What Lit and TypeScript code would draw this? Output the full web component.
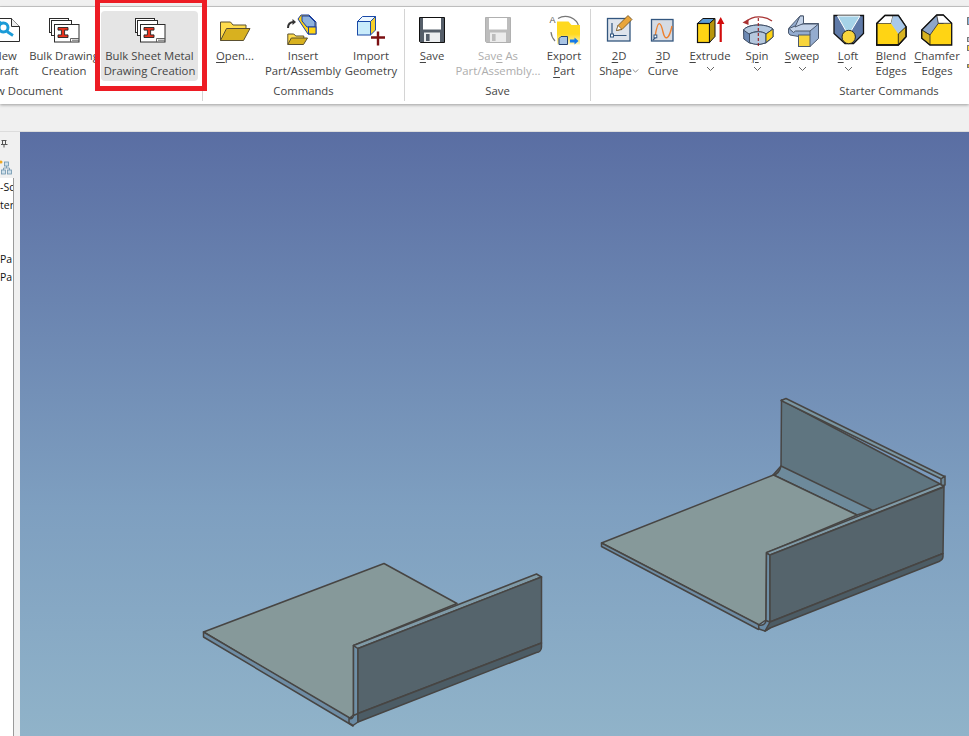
import { LitElement, html, css, svg, nothing } from "lit";
import { customElement } from "lit/decorators.js";

const INK = "#2b2b2b";

const sheets = svg`
  <rect x="1.5" y="4.5" width="19" height="14" fill="#fff" stroke="${INK}"/>
  <rect x="3.5" y="6.5" width="20" height="15" fill="#fff" stroke="${INK}"/>
  <rect x="6.5" y="10.5" width="24.5" height="17.5" fill="#fff" stroke="${INK}"/>
  <path d="M10 13.5h10v2.6h-3.4v4.8H20v2.6H10v-2.6h3.4v-4.8H10z" fill="#e8321c" stroke="#222" stroke-width=".9"/>
  <path d="M22.5 24.5H31M22.5 24.5v3.5M24 26.2h7" fill="none" stroke="#555" stroke-width=".9"/>`;

const floppy = (body: string, edge: string, panel: string) => svg`
  <path d="M3.5 3.5h25v25h-24l-1-1z" fill="${body}" stroke="${edge}"/>
  <rect x="7" y="4" width="18" height="11.5" fill="#fff"/>
  <rect x="8" y="18.5" width="16" height="9.5" fill="${panel}"/>
  <rect x="10" y="20" width="3.6" height="7" fill="${body}"/>`;

const folderParts = svg`
  <path d="M1.5 26.5V8h10l2.5 3h13v5" fill="#ffdc4d" stroke="#5b5030"/>`;

const ICONS: Record<string, unknown> = {
  draft: svg`
    <path d="M8.5 4.5h14l8 8v15h-22z" fill="#fff" stroke="${INK}"/>
    <path d="M22.5 4.5v8h8" fill="#eee" stroke="${INK}"/>
    <circle cx="14.500" cy="13.500" r="4.500" fill="none" stroke="#1b9bd7" stroke-width="3"/>
    <path d="M18 17.500l6 4M9 7l4 3" stroke="#1b9bd7" stroke-width="2.800"/>`,
  sheets,
  open: svg`
    ${folderParts}
    <path d="M1.5 26.5l6-12h23.5l-6.5 12z" fill="#d8b11f" stroke="#5b5030"/>`,
  insert: svg`
    <path d="M1 14c0-4 2.500-6 6-6" fill="none" stroke="#333" stroke-width="2"/>
    <path d="M5.500 5l3.500 3-3.500 3z" fill="#333"/>
    <path d="M.8 30.500V20h6l2 2h8v3" fill="#ffdc4d" stroke="#5b5030"/>
    <path d="M.8 30.500l3.500-6.500H20.500l-4 6.500z" fill="#d8b11f" stroke="#5b5030"/>
    <path d="M11 5l3-4h8l7 7v12h-8z" fill="#ffd414" stroke="#1c3f9e"/>
    <path d="M15 2h7l6 6v5h-8l-5-6z" fill="#8fb2dc" stroke="#1c3f9e"/>
    <rect x="21.500" y="13" width="7.500" height="7" fill="#ffd414" stroke="#1c3f9e"/>`,
  import: svg`
    <path d="M2.500 7.500l5-5h13l-5 5z" fill="#eef8ff" stroke="#1b4aa8"/>
    <rect x="2.500" y="7.500" width="13" height="13.500" fill="#c9ecfb" stroke="#1b4aa8"/>
    <path d="M15.500 7.500l5-5v13.500l-5 5z" fill="#f5cf2a" stroke="#1b4aa8"/>
    <path d="M16 23.500h14M23 17.500v14" stroke="#7b0f12" stroke-width="2.400" fill="none"/>`,
  save: floppy("#555e69", "#111", "#eceef0"),
  saveas: floppy("#bdbdbd", "#b0b0b0", "#ececec"),
  export: svg`
    <text x="1.500" y="8.500" font-family="Liberation Sans, sans-serif" font-size="9" fill="#555">A</text>
    <path d="M10 4.500A14 14 0 0 1 31 13M3 18a15 15 0 0 0 4 9" fill="none" stroke="#777" stroke-width="1.200"/>
    <defs><linearGradient id="ex" x1="0" x2="0" y1="0" y2="1"><stop offset=".55" stop-color="#ffd91f"/><stop offset="1" stop-color="#fff6c4"/></linearGradient></defs>
    <path d="M9 7.500h11.500l3 3.500H32v19.500H9z" fill="url(#ex)"/>
    <path d="M11 24.500l2-2h6.500v8H11z" fill="#a9c4e4" stroke="#24406f"/>
    <path d="M22 25.500h4.500v-2l4 3.500-4 3.500v-2H22z" fill="#1479e8"/>`,
  shape: svg`
    <rect x="4.500" y="4.500" width="22.500" height="22.500" fill="#dfe4ec" stroke="#33567f" stroke-width="1.300"/>
    <path d="M9 9v12.500h14.500" fill="none" stroke="#33567f" stroke-width="1.200"/>
    <rect x="7.500" y="20" width="3" height="3" fill="#fff" stroke="#33567f"/>
    <path d="M13.500 16.500l1.500-5 10-10 4 4-10 10z" fill="#e9a53a" stroke="#6b4a18" stroke-width=".8"/>
    <path d="M13.500 16.500l1.500-5 3.500 3.500z" fill="#fff" stroke="#6b4a18" stroke-width=".6"/>`,
  curve: svg`
    <rect x="4.500" y="5.500" width="21.500" height="21.500" fill="#d6dbe3" stroke="#33567f" stroke-width="1.300"/>
    <path d="M6 26l3-3" stroke="#33567f" stroke-width="1.200"/>
    <path d="M8 23c3-20 6-14 8-5s6 8 9-6" fill="none" stroke="#ee7f2c" stroke-width="1.400"/>
    <rect x="7" y="21" width="2.800" height="2.800" fill="#fff" stroke="#33567f"/>`,
  extrude: svg`
    <path d="M3.500 9.500l5.500-5h12l-5.500 5z" fill="#5b9bd5" stroke="#111"/>
    <rect x="3.500" y="9.500" width="12" height="19" fill="#ffd414" stroke="#111" stroke-width="1.200"/>
    <path d="M15.500 9.500l5.500-5v18l-5.500 6z" fill="#b8960c" stroke="#111"/>
    <path d="M26.700 28V8" stroke="#d20c0c" stroke-width="2.200"/>
    <path d="M23 10l3.700-7 3.700 7z" fill="#d20c0c"/>`,
  spin: svg`
    <path d="M2.500 16c2-3 8-5 15-5s12 2 14.500 4v8l-7 6-7.700 1.500-9-1.500-5.500-4z" fill="#6d8ab5" stroke="#3d4c63"/>
    <path d="M2.500 16c2-3 8-5 15-5s12 2 14.500 4l-7 5c-4-3-12-3-17 0z" fill="#b4c8df" stroke="#3d4c63"/>
    <path d="M8.500 20c5-3 13-3 16.500 0v8.500c-5 2.500-11 2.500-16.500 0z" fill="#b6c8de" stroke="#3d4c63"/>
    <path d="M25 20l7-5v8l-7 5.500z" fill="#ffd414" stroke="#3d4c63"/>
    <path d="M17.300 4v28" stroke="#9b1c1c" stroke-width="1.100" stroke-dasharray="3 2"/>
    <path d="M5.500 7.500c6-6 18-6 25.500-.5" fill="none" stroke="#a83232" stroke-width="1.300"/>
    <path d="M1.500 8.500l6-3.500v6z" fill="#a83232"/>`,
  sweep: svg`
    <path d="M2.500 14.500L14 2h3.500v7.500h15v15L24 32.500H12.500V22.500L4 21l-1.500-2z" fill="#94accf" stroke="#4a586e"/>
    <path d="M3 14.500l11-4.500h18.500L24 17H9.500l-2 1.500z" fill="#c3d2e8" stroke="#4a586e"/>
    <path d="M14 2h3.500v7.500L9 13z" fill="#c3d2e8" stroke="#4a586e"/>
    <rect x="12.500" y="21" width="11.500" height="11.500" fill="#f8d53c" stroke="#4a586e"/>
    <path d="M24 17v4" stroke="#4a586e"/>`,
  loft: svg`
    <path d="M2 1.500h29.500v18l-10 10H13l-11-10z" fill="#5f7aa8" stroke="#111" stroke-width="1.300"/>
    <path d="M5.500 2h22.500l-9 15h-5z" fill="#a6d3e8" stroke="#fff"/>
    <circle cx="16.700" cy="23" r="6.700" fill="#f8d53c" stroke="#222"/>`,
  blend: svg`
    <path d="M1.700 9.500L10 1.500h13.300L31 12.700v10L23.300 31H1.700z" fill="#ffd414" stroke="#111" stroke-width="1.300"/>
    <path d="M1.700 9.500L10 1.500h8L16 9.500z" fill="#fff" stroke="#111" stroke-width=".6"/>
    <path d="M16 9.500l2-8h5.300L31 12.700 23.300 20z" fill="#a9c8e8"/>
    <path d="M23.300 20L31 12.700v10L23.300 31z" fill="#d8b320" stroke="#111" stroke-width=".8"/>
    <path d="M1.700 9.500L10 1.500h13.300L31 12.700v10L23.300 31H1.700z" fill="none" stroke="#111" stroke-width="1.300"/>`,
  chamfer: svg`
    <path d="M9 21L17.300 9.300H30.700V31H9z" fill="#ffd414"/>
    <path d="M.7 16L15.700 1l6.600 8.300-5 0L9 21z" fill="#8ea6c8" stroke="#222" stroke-width=".8"/>
    <path d="M15.700 1h6.600l8.400 8.300H17.300z" fill="#fff" stroke="#222" stroke-width=".8"/>
    <path d="M.7 16L9 21v10L.7 24.300z" fill="#d8b320" stroke="#222" stroke-width=".8"/>
    <path d="M.7 16L15.700 1h6.600l8.400 8.300V31H9L.7 24.300z" fill="none" stroke="#111" stroke-width="1.300"/>`,
};

interface Tool { icon: string; w: number; l1: unknown; l2?: unknown; chev?: boolean; inlineChev?: boolean; off?: boolean; hot?: boolean }

const GROUPS: { cls: string; label: string; tools: Tool[] }[] = [
  { cls: "g1", label: "New Document", tools: [
    { icon: "draft", w: 44, l1: "New", l2: "Draft" },
    { icon: "sheets", w: 74, l1: "Bulk Drawing", l2: "Creation" },
    { icon: "sheets", w: 97, l1: "Bulk Sheet Metal", l2: "Drawing Creation", hot: true },
  ]},
  { cls: "g2", label: "Commands", tools: [
    { icon: "open", w: 52, l1: html`<u>O</u>pen...` },
    { icon: "insert", w: 84, l1: "Insert", l2: "Part/Assembly" },
    { icon: "import", w: 52, l1: "Import", l2: "Geometry" },
  ]},
  { cls: "g3", label: "Save", tools: [
    { icon: "save", w: 40, l1: html`<u>S</u>ave` },
    { icon: "saveas", w: 92, l1: html`Sav<u>e</u> As`, l2: "Part/Assembly...", off: true },
    { icon: "export", w: 40, l1: "Export", l2: html`<u>P</u>art` },
  ]},
  { cls: "g4", label: "Starter Commands", tools: [
    { icon: "shape", w: 44, l1: html`<u>2</u>D`, l2: "Shape", inlineChev: true },
    { icon: "curve", w: 44, l1: html`<u>3</u>D`, l2: "Curve" },
    { icon: "extrude", w: 50, l1: html`<u>E</u>xtrude`, chev: true },
    { icon: "spin", w: 44, l1: html`S<u>p</u>in`, chev: true },
    { icon: "sweep", w: 46, l1: html`<u>S</u>weep`, chev: true },
    { icon: "loft", w: 46, l1: html`<u>L</u>oft`, chev: true },
    { icon: "blend", w: 40, l1: html`<u>B</u>lend`, l2: "Edges" },
    { icon: "chamfer", w: 52, l1: html`<u>C</u>hamfer`, l2: "Edges" },
  ]},
];

const chevron = html`<svg class="chev" width="9" height="6" viewBox="0 0 9 6"><path d="M1 1l3.500 3.500L8 1" fill="none" stroke="#666" stroke-width="1"/></svg>`;

const EDGE = "#474543";

const parts = svg`
  <g stroke="${EDGE}" stroke-width="1.500" stroke-linejoin="round">
    <path d="M203.500 632L384 563.500 457 603.500 353.500 645.500 353.500 715 349 718.500z" fill="#86999a"/>
    <path d="M203.500 632v5L349 723.500l4 2.500 1-8-5-.5z" fill="#6e8ca4"/>
    <path d="M349 718.500c3 1 4.500-1 4.500-4l4.500-2v9.500l-5 3.500-4-2.500z" fill="#6a8ba5"/>
    <path d="M353.500 645.500l4.500 3v65l-4.500 2z" fill="#6f8fa6"/>
    <path d="M353.500 645.500L536.500 574l5 3-183.500 71.500z" fill="#7f9aa7"/>
    <path d="M358 648.500L541.500 577v66L358 713.500z" fill="#55646c"/>
    <path d="M358 713.500L541.500 643v4c0 3-2 5.500-5 5.500L358 722z" fill="#4c5c65"/>
  </g>
  <g stroke="${EDGE}" stroke-width="1.500" stroke-linejoin="round">
    <path d="M781.500 400l-.5 66-8 9 99 36 70-26z" fill="#5f7580"/>
    <path d="M781 400.500l5-2 158.500 78-3 2.500z" fill="#7a96a3"/>
    <path d="M941 479l4-3v9l-4 1z" fill="#6b8494"/>
    <path d="M773.500 475c4-1 6.500-4.500 7.500-9l91 44-15 5z" fill="#6d8a9b"/>
    <path d="M601.500 543L773.500 475 857 515 766.500 553 766 620l-7.500 5z" fill="#86999a"/>
    <path d="M601.500 543v3.500L758.500 629.500l1-4.500z" fill="#6e8ca4"/>
    <path d="M758.500 625c4 1 7.500-1 7.500-5l4 2v6l-5 3-6-2z" fill="#6a8ba5"/>
    <path d="M766.500 553l3.500 2v67l-4-1.500z" fill="#6f8fa6"/>
    <path d="M766.500 552.500L940 484l4 2.500L770 555z" fill="#7f9aa7"/>
    <path d="M770 555L944 487l-1 66.500L770 622z" fill="#55646c"/>
    <path d="M770 622l173-68.500v3c0 2-2 4-4 5L770 628l-5 3z" fill="#4c5c65"/>
  </g>`;

@customElement("app-root")
export class AppRoot extends LitElement {
  static styles = css`
    :host {
      display: flex;
      flex-direction: column;
      width: 100%;
      height: 100vh;
      overflow: hidden;
      position: relative;
      background: #f0f0f0;
      font-family: "Open Sans", "Liberation Sans", sans-serif;
      font-size: 11.3px;
      color: #444;
    }
    .topstrip { height: 6px; background: #f0f0f0; border-bottom: 1px solid #c9c9c9; flex: none; }
    .ribbon {
      height: 97px; flex: none; display: flex; background: #fff;
      box-shadow: 0 1px 3px rgba(0, 0, 0, .35); position: relative; overflow: hidden;
    }
    .group {
      flex: none; box-sizing: border-box; height: 92px; margin-top: 2px;
      display: flex; flex-direction: column;
      border-right: 1px solid #d4d4d4;
    }
    .g1 { width: 361px; margin-left: -158px; }
    .g1 .tools { padding-left: 141px; }
    .g2 { width: 202px; }
    .g2 .tools { padding-left: 6px; }
    .g3 { width: 186px; }
    .g3 .tools { padding-left: 7px; }
    .g4 { width: 596px; border-right: none; }
    .g4 .tools { padding-left: 6px; }
    .tools { display: flex; padding-top: 2px; height: 72px; box-sizing: border-box; flex: none; }
    .tool {
      flex: none; box-sizing: border-box; height: 70px; padding-top: 3px;
      display: flex; flex-direction: column; align-items: center;
      border-radius: 4px; white-space: nowrap;
    }
    .tool.hot { background: #e5e5e5; }
    .tool.off { color: #adadad; }
    .tool > svg.ic { flex: none; display: block; overflow: visible; }
    .line { line-height: 15px; height: 15px; display: flex; justify-content: center; align-items: center; }
    .line.first { margin-top: 2px; }
    .line.cv { height: 12px; }
    .chev { display: block; }
    .inl { margin-left: 0; width: 7px; overflow: visible; }
    .inl .chev { width: 7px; }
    .glabel { text-align: center; line-height: 15px; margin-top: 2px; white-space: nowrap; }
    u { text-underline-offset: 1.500px; text-decoration-thickness: 1px; }
    .small { display: flex; flex-direction: column; flex: none; width: 12px; padding: 6px 0 0 4px; }
    .small i { display: block; width: 10px; box-sizing: border-box; border: 1px solid #777; }
    .s1 { height: 8px; background: #7fb0dc; margin-bottom: 12px; }
    .s2 { height: 5px; background: #b8c4d4; margin-bottom: 3px; }
    .s3 { height: 6px; background: #ffd83a; margin-bottom: 13px; }
    .s4 { height: 4px; background: #e0b52a; }

    .main { flex: 1; min-height: 0; margin-top: 27px; border-top: 1px solid #dcdcdc; display: flex; }
    .side { flex: none; width: 20px; display: flex; flex-direction: column; }
    .sidehead { height: 46px; flex: none; box-sizing: border-box; padding: 5px 0 0 1px; }
    .sidehead svg { display: block; overflow: visible; }
    .tree {
      flex: 1; width: 14px; box-sizing: border-box; background: #fff;
      border-right: 1px solid #9a9a9a; overflow: hidden;
      color: #111; font-size: 10.5px;
    }
    .tree div { height: 18px; line-height: 18px; white-space: nowrap; overflow: hidden; }
    .canvas {
      flex: 1; min-width: 0; position: relative;
      background: linear-gradient(180deg, #5a6ea3 0%, #7e9fc0 62%, #90b3c9 100%);
    }
    .canvas svg { display: block; width: 100%; height: 100%; }
    .mark {
      position: absolute; left: 95px; top: -2px; width: 112px; height: 93px; box-sizing: border-box;
      border: 5px solid #ed1c24; pointer-events: none;
    }
  `;

  private tool(t: Tool) {
    return html`<div class="tool ${t.hot ? "hot" : ""} ${t.off ? "off" : ""}" style="width:${t.w}px">
      <svg class="ic" width="32" height="32" viewBox="0 0 32 32">${ICONS[t.icon]}</svg>
      <div class="line first"><span>${t.l1}</span></div>
      ${t.l2 ? html`<div class="line"><span>${t.l2}</span>${t.inlineChev ? html`<span class="inl">${chevron}</span>` : nothing}</div>` : nothing}
      ${t.chev ? html`<div class="line cv">${chevron}</div>` : nothing}
    </div>`;
  }

  render() {
    return html`
      <div class="topstrip"></div>
      <div class="ribbon">
        ${GROUPS.map((g) => html`<div class="group ${g.cls}">
          <div class="tools">
            ${g.tools.map((t) => this.tool(t))}
            ${g.cls === "g4" ? html`<div class="small"><i class="s1"></i><i class="s2"></i><i class="s3"></i><i class="s4"></i></div>` : nothing}
          </div>
          <div class="glabel">${g.label}</div>
        </div>`)}
      </div>
      <div class="main">
        <div class="side">
          <div class="sidehead">
            <svg width="12" height="38" viewBox="0 0 12 38">
              <path d="M.5 3.500h5M1.500 3.500v4M4.500 3.500v4M0 7.500h6.500M3 7.500v3" fill="none" stroke="#555" stroke-width="1"/>
              <circle cx="0" cy="25" r="1.500" fill="#f0a820"/>
              <g fill="#cfe0ea" stroke="#6d93ad" stroke-width=".8">
                <rect x="3.500" y="25" width="4" height="4"/>
                <rect x=".5" y="33" width="4" height="4"/>
                <rect x="6.500" y="33" width="4" height="4"/>
              </g>
              <path d="M5.500 29v2M2.500 33v-2h6v2" fill="none" stroke="#6d93ad" stroke-width=".8"/>
            </svg>
          </div>
          <div class="tree">
            <div>-Sc</div><div>ter</div><div></div><div></div><div>Pa</div><div>Pa</div>
          </div>
        </div>
        <div class="canvas">
          <svg viewBox="20 132 949 604" preserveAspectRatio="none">${parts}</svg>
        </div>
      </div>
      <div class="mark"></div>
    `;
  }
}
